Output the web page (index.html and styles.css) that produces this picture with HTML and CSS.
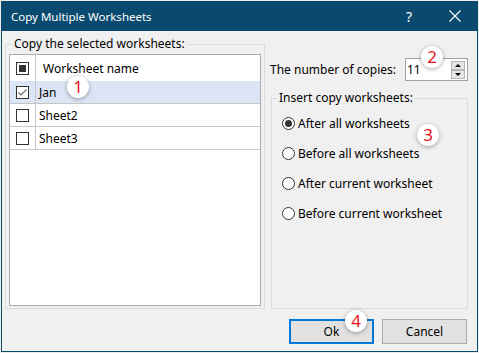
FILE: index.html
```html
<!DOCTYPE html>
<html lang="en">
<head>
  <meta charset="UTF-8">
  <title>Copy Multiple Worksheets</title>
  <link rel="stylesheet" href="styles.css">
</head>
<body>

<div class="dialog">
  <div class="titlebar">
    <span class="title">Copy Multiple Worksheets</span>
    <span class="tb-btn">?</span>
    <span class="tb-btn">
      <svg width="12" height="12" viewBox="0 0 12 12"><path d="M0.5 0.5 L11.5 11.5 M11.5 0.5 L0.5 11.5" stroke="#fff" stroke-width="1.1" fill="none"/></svg>
    </span>
  </div>

  <div class="content">
    <div class="main">
      <fieldset class="group sheets">
        <legend>Copy the selected worksheets:</legend>
        <div class="list">
          <div class="row head">
            <span class="cell-check"><span class="check mixed"></span></span>
            <span class="cell-name">Worksheet name</span>
          </div>
          <div class="row selected">
            <span class="cell-check">
              <span class="check">
                <svg width="11" height="11" viewBox="0 0 11 11"><path d="M1.5 5.5 L4 8 L9.5 2.5" stroke="#666" stroke-width="1.1" fill="none"/></svg>
              </span>
            </span>
            <span class="cell-name">Jan</span>
          </div>
          <div class="row">
            <span class="cell-check"><span class="check"></span></span>
            <span class="cell-name">Sheet2</span>
          </div>
          <div class="row">
            <span class="cell-check"><span class="check"></span></span>
            <span class="cell-name">Sheet3</span>
          </div>
        </div>
      </fieldset>

      <div class="side">
        <div class="copies">
          <span>The number of copies:</span>
          <div class="spin">
            <span class="spin-value">11</span>
            <div class="spin-btns">
              <span class="spin-btn up"></span>
              <span class="spin-btn down"></span>
            </div>
          </div>
        </div>
        <fieldset class="group insert">
          <legend>Insert copy worksheets:</legend>
          <div class="option"><span class="radio on"></span>After all worksheets</div>
          <div class="option"><span class="radio"></span>Before all worksheets</div>
          <div class="option"><span class="radio"></span>After current worksheet</div>
          <div class="option"><span class="radio"></span>Before current worksheet</div>
        </fieldset>
      </div>
    </div>

    <div class="buttons">
      <span class="btn default">Ok</span>
      <span class="btn">Cancel</span>
    </div>
  </div>

  <span class="badge b1">1</span>
  <span class="badge b2">2</span>
  <span class="badge b3">3</span>
  <span class="badge b4">4</span>
</div>

</body>
</html>
```

FILE: styles.css
```css
body {
  margin: 0;
  background: #ececec;
  font-family: "Noto Sans", "Liberation Sans", sans-serif;
  font-size: 12px;
  color: #000;
}

.dialog {
  position: relative;
  box-sizing: border-box;
  width: 477px;
  height: 351px;
  margin: 1px 0 0 1px;
  padding: 0 1px 1px;
  background: #0b4a6f;
  display: flex;
  flex-direction: column;
}

.titlebar {
  height: 30px;
  margin: 0 -1px;
  display: flex;
  align-items: center;
  color: #fff;
}

.title {
  flex: 1;
  padding-left: 10px;
  font-size: 11.5px;
}

.tb-btn {
  width: 46px;
  height: 30px;
  display: flex;
  align-items: center;
  justify-content: center;
  font-size: 14px;
}

.content {
  flex: 1;
  background: #f0f0f0;
  padding: 5px 9px 0 3px;
  display: flex;
  flex-direction: column;
}

.main {
  display: flex;
  gap: 5px;
}

.group {
  margin: 0;
  border: 1px solid #dcdcdc;
  min-width: 0;
}

.group legend {
  padding: 0 2px;
  line-height: 16px;
}

.sheets {
  width: 260px;
  box-sizing: border-box;
  padding: 0 3px 2px;
}

.sheets legend {
  margin-left: 3px;
}

.list {
  margin-top: 2px;
  height: 252px;
  box-sizing: border-box;
  border: 1px solid #adadad;
  background: #fff;
}

.row {
  display: flex;
  height: 22px;
  border-bottom: 1px solid #c6c6c6;
}

.row.head {
  height: 26px;
  border-bottom: 0;
}

.row.selected {
  background: #dce5f5;
}

.cell-check {
  width: 25px;
  border-right: 1px solid #c6c6c6;
  display: flex;
  align-items: center;
  justify-content: center;
}

.cell-name {
  display: flex;
  align-items: center;
  padding-left: 3px;
}

.head .cell-name {
  padding-left: 7px;
}

.check {
  width: 13px;
  height: 13px;
  box-sizing: border-box;
  border: 1px solid #333;
  background: #fff;
  display: flex;
  align-items: center;
  justify-content: center;
}

.check.mixed::after {
  content: "";
  width: 7px;
  height: 7px;
  background: #333;
}

.side {
  width: 198px;
  display: flex;
  flex-direction: column;
  padding-top: 22px;
}

.copies {
  height: 23px;
  display: flex;
  align-items: center;
  justify-content: space-between;
}

.spin {
  width: 63px;
  height: 23px;
  box-sizing: border-box;
  border: 1px solid #a0a0a0;
  background: #fff;
  display: flex;
  align-items: center;
  justify-content: space-between;
  padding: 0 2px 0 1px;
}

.spin-btns {
  display: flex;
  flex-direction: column;
}

.spin-btn {
  width: 14px;
  height: 9px;
  box-sizing: border-box;
  border: 1px solid #b4b4b4;
  background: #e6e6e6;
  display: flex;
  align-items: center;
  justify-content: center;
}

.spin-btn.up::after {
  content: "";
  border-left: 3px solid transparent;
  border-right: 3px solid transparent;
  border-bottom: 3px solid #000;
}

.spin-btn.down::after {
  content: "";
  border-left: 3px solid transparent;
  border-right: 3px solid transparent;
  border-top: 3px solid #000;
}

.insert {
  flex: 1;
  margin: 9px 0 0 1px;
  padding: 2px 0 0 10px;
}

.insert legend {
  margin-left: -5px;
}

.option {
  height: 30px;
  display: flex;
  align-items: center;
  gap: 3px;
}

.radio {
  width: 13px;
  height: 13px;
  box-sizing: border-box;
  border: 1px solid #333;
  border-radius: 50%;
  background: #fff;
  display: flex;
  align-items: center;
  justify-content: center;
}

.radio.on::after {
  content: "";
  width: 7px;
  height: 7px;
  border-radius: 50%;
  background: #333;
}

.buttons {
  margin: 10px 1px 0 0;
  display: flex;
  justify-content: flex-end;
  gap: 8px;
}

.btn {
  width: 85px;
  height: 25px;
  box-sizing: border-box;
  border: 1px solid #adadad;
  background: #e1e1e1;
  display: flex;
  align-items: center;
  justify-content: center;
}

.btn.default {
  border: 2px solid #0078d7;
}

.badge {
  position: absolute;
  width: 22px;
  height: 22px;
  border-radius: 50%;
  background: #fff;
  box-shadow: 0 1px 4px rgba(0, 0, 0, 0.35);
  color: #e8141c;
  font-size: 17px;
  line-height: 22px;
  text-align: center;
}

.b1 { left: 66px; top: 75px; }
.b2 { left: 420px; top: 45px; }
.b3 { left: 416px; top: 123px; }
.b4 { left: 344px; top: 309px; }
```
